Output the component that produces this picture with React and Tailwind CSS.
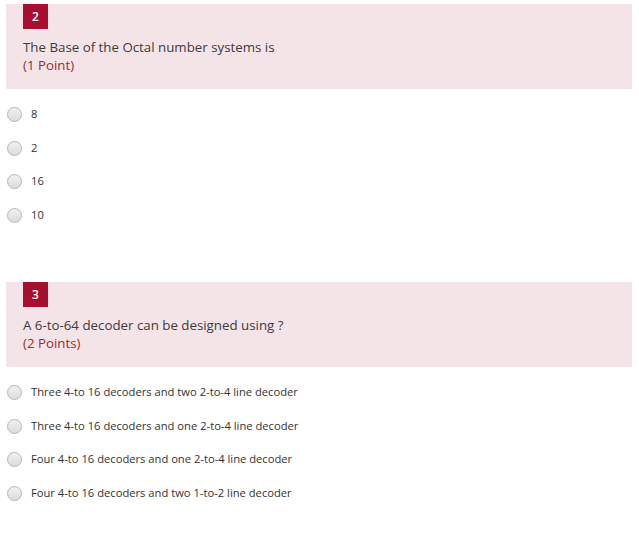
import React from 'react';

const questions = [
  {
    num: 2,
    title: 'The Base of the Octal number systems is',
    points: '(1 Point)',
    options: ['8', '2', '16', '10'],
  },
  {
    num: 3,
    title: 'A 6-to-64 decoder can be designed using ?',
    points: '(2 Points)',
    options: [
      'Three 4-to 16 decoders and two 2-to-4 line decoder',
      'Three 4-to 16 decoders and one 2-to-4 line decoder',
      'Four 4-to 16 decoders and one 2-to-4 line decoder',
      'Four 4-to 16 decoders and two 1-to-2 line decoder',
    ],
  },
];

const Radio = () => (
  <span className="w-[15px] h-[15px] rounded-full border border-[#b5b5b5] bg-gradient-to-b from-[#f0f0f0] to-[#dcdcdc] shrink-0" />
);

const Question = ({ q }) => (
  <div>
    {/* Header */}
    <div className="bg-[#f4e4e8] pl-[17px] pb-[15px]">
      <div className="w-[25px] h-[25px] bg-[#a80f2f] text-white text-[12px] font-semibold flex items-center justify-center">
        {q.num}
      </div>
      <div className="pt-[9px] text-[13.3px] leading-[18px] text-[#3b3b3b]">
        <p>{q.title}</p>
        <p className="text-[#a4262c]">{q.points}</p>
      </div>
    </div>

    {/* Options */}
    <div className="pt-[9px] flex flex-col">
      {q.options.map((opt) => (
        <label key={opt} className="h-[33.5px] flex items-center gap-[9px] pl-[1px] text-[11.2px] text-[#333]">
          <Radio />
          <span>{opt}</span>
        </label>
      ))}
    </div>
  </div>
);

export default function App() {
  return (
    <div className="bg-white min-h-screen pt-[4px] pl-[6px] pr-[7px] font-['Open_Sans',sans-serif]">
      <div className="flex flex-col gap-[50px]">
        {questions.map((q) => (
          <Question key={q.num} q={q} />
        ))}
      </div>
    </div>
  );
}
